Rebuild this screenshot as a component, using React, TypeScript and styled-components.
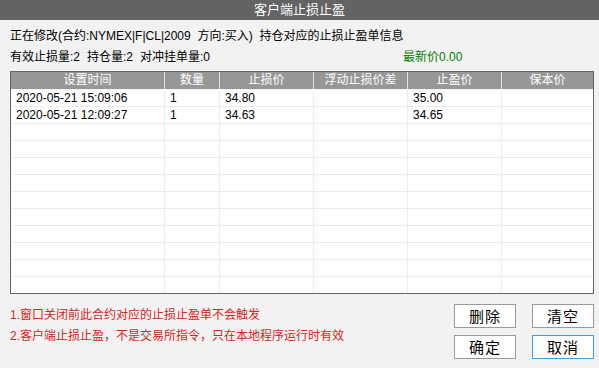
import React from 'react';
import styled, { createGlobalStyle } from 'styled-components';

const GlobalStyle = createGlobalStyle`
html, body {
	margin: 0;
	padding: 0;
	background: #f2f2f2;
}
body {
	font-family: "Liberation Sans", "Noto Sans CJK SC", sans-serif;
	font-size: 12px;
	color: #000;
}
`;

type Order = {
	time: string,
	qty: string,
	stop: string,
	trail: string,
	profit: string,
	breakeven: string,
};

const COLUMNS = ["设置时间", "数量", "止损价", "浮动止损价差", "止盈价", "保本价"];

const ORDERS: Order[] = [
	{ time: "2020-05-21 15:09:06", qty: "1", stop: "34.80", trail: "", profit: "35.00", breakeven: "" },
	{ time: "2020-05-21 12:09:27", qty: "1", stop: "34.63", trail: "", profit: "34.65", breakeven: "" },
];

const ROW_COUNT = 12;

const Window = styled.div`
width: 599px;
height: 368px;
display: flex;
flex-direction: column;
background: #f2f2f2;
overflow: hidden;
`;

const TitleBar = styled.div`
height: 20px;
flex: none;
background: #636363;
color: #fff;
font-size: 13px;
line-height: 20px;
text-align: center;
`;

const Body = styled.div`
flex: 1;
display: flex;
flex-direction: column;
padding: 6px 5px 0 10px;
`;

const InfoLine = styled.div`
height: 21px;
line-height: 21px;
white-space: nowrap;
`;

const StatLine = styled.div`
height: 21px;
line-height: 21px;
display: grid;
grid-template-columns: 393px auto;
white-space: nowrap;
`;

const Stats = styled.div`
display: flex;
gap: 7px;
`;

const LastPrice = styled.span`
color: #008000;
`;

const Table = styled.div`
margin-top: 3px;
width: 582px;
border: 1px solid #646464;
background: #fff;
`;

const Grid = styled.div<{ $head?: boolean }>`
display: grid;
grid-template-columns: 154px 55px 94px 94px 94px 1fr;
height: ${p => p.$head ? 17 : 16}px;
border-bottom: 1px solid ${p => p.$head ? "#f4f4f4" : "#ececec"};
background: ${p => p.$head ? "#979797" : "#fff"};
&:last-child {
	border-bottom: none;
}
`;

const HeadCell = styled.div`
color: #fff;
text-align: center;
line-height: 17px;
border-right: 1px solid #e6e6e6;
&:last-child { border-right: none; }
`;

const Cell = styled.div`
padding-left: 5px;
line-height: 16px;
border-right: 1px solid #ececec;
color: #000;
white-space: nowrap;
&:last-child { border-right: none; }
`;

const Footer = styled.div`
display: flex;
justify-content: space-between;
margin-top: 10px;
`;

const Notes = styled.div`
padding-top: 1px;
color: #d9241c;
line-height: 21px;
`;

const Buttons = styled.div`
display: grid;
grid-template-columns: 62px 62px;
column-gap: 16px;
row-gap: 7px;
`;

const Button = styled.button<{ $focused?: boolean }>`
width: 62px;
height: 24px;
padding: 0;
background: #fff;
border: 1px solid ${p => p.$focused ? "#3a9ee6" : "#9a9a9a"};
font-family: "Noto Sans CJK SC", sans-serif;
font-size: 15px;
line-height: 22px;
letter-spacing: 1px;
color: #000;
`;

export default function App() {
	const rows = Array.from({ length: ROW_COUNT }, (_, i) => ORDERS[i]);

	return <Window>
		<GlobalStyle />
		<TitleBar>客户端止损止盈</TitleBar>
		<Body>
			<InfoLine>正在修改(合约:NYMEX|F|CL|2009&nbsp;&nbsp;方向:买入)&nbsp;&nbsp;持仓对应的止损止盈单信息</InfoLine>
			<StatLine>
				<Stats>
					<span>有效止损量:2</span>
					<span>持仓量:2</span>
					<span>对冲挂单量:0</span>
				</Stats>
				<LastPrice>最新价0.00</LastPrice>
			</StatLine>
			<Table>
				<Grid $head>
					{COLUMNS.map(c => <HeadCell key={c}>{c}</HeadCell>)}
				</Grid>
				{rows.map((o, i) => <Grid key={i}>
					<Cell>{o?.time}</Cell>
					<Cell>{o?.qty}</Cell>
					<Cell>{o?.stop}</Cell>
					<Cell>{o?.trail}</Cell>
					<Cell>{o?.profit}</Cell>
					<Cell>{o?.breakeven}</Cell>
				</Grid>)}
			</Table>
			<Footer>
				<Notes>
					<div>1.窗口关闭前此合约对应的止损止盈单不会触发</div>
					<div>2.客户端止损止盈，不是交易所指令，只在本地程序运行时有效</div>
				</Notes>
				<Buttons>
					<Button>删除</Button>
					<Button>清空</Button>
					<Button>确定</Button>
					<Button $focused>取消</Button>
				</Buttons>
			</Footer>
		</Body>
	</Window>;
}
